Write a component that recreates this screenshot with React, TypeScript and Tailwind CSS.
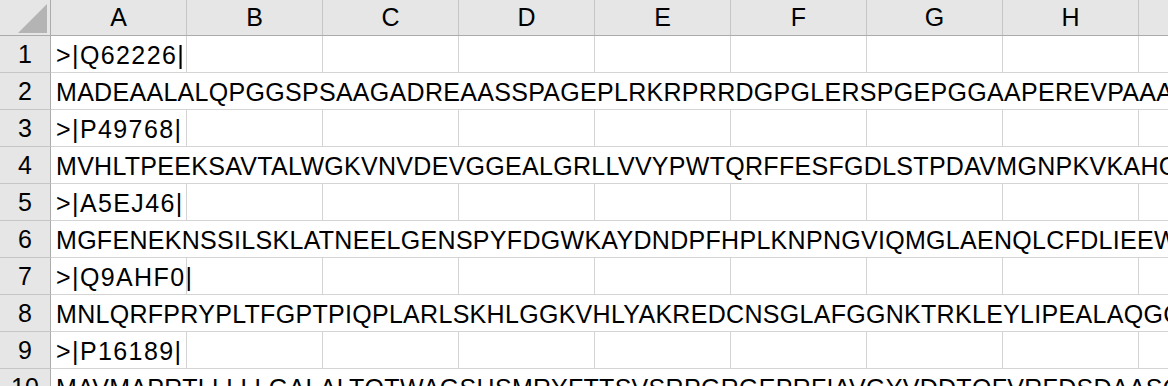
import React from 'react';

const columns = ['A', 'B', 'C', 'D', 'E', 'F', 'G', 'H', 'I'];

// odd rows hold the FASTA header, even rows the sequence that spills over the cells
const rows: string[] = [
  '>|Q62226|',
  'MADEAALALQPGGSPSAAGADREAASSPAGEPLRKRPRRDGPGLERSPGEPGGAAPEREVPAAARAVSEPG',
  '>|P49768|',
  'MVHLTPEEKSAVTALWGKVNVDEVGGEALGRLLVVYPWTQRFFESFGDLSTPDAVMGNPKVKAHGKKVLGAF',
  '>|A5EJ46|',
  'MGFENEKNSSILSKLATNEELGENSPYFDGWKAYDNDPFHPLKNPNGVIQMGLAENQLCFDLIEEWTRKNP',
  '>|Q9AHF0|',
  'MNLQRFPRYPLTFGPTPIQPLARLSKHLGGKVHLYAKREDCNSGLAFGGNKTRKLEYLIPEALAQGCDTLV',
  '>|P16189|',
  'MAVMAPRTLLLLLGALALTQTWAGSHSMRYFTTSVSRPGRGEPRFIAVGYVDDTQFVRFDSDAASQRMEP',
];

const font = { fontFamily: '"Liberation Sans", Arial, sans-serif' };

const HeaderRow = () => (
  <div className="flex h-[36px] shrink-0 bg-[#e6e6e6] border-b border-[#ababab]">
    <div className="relative w-[51px] shrink-0 border-r border-[#ababab]">
      <svg className="absolute left-0 top-0" width="50" height="35" viewBox="0 0 50 35">
        <polygon points="18,33 47,33 47,4" fill="#b4b4b4" />
      </svg>
    </div>
    {columns.map((c) => (
      <div
        key={c}
        className="w-[136px] shrink-0 border-r border-[#c6c6c6] flex items-center justify-center text-[25px] text-black pt-[1px]"
      >
        {c}
      </div>
    ))}
  </div>
);

const Row = ({ n, value }: { n: number; value: string }) => {
  const spills = value.length > 12;
  return (
    <div className="flex h-[37px] shrink-0">
      <div className="w-[51px] shrink-0 bg-[#e6e6e6] border-r border-[#ababab] border-b border-b-[#c6c6c6] flex items-center justify-center text-[25px] text-black pt-[2px]">
        {n}
      </div>
      {spills ? (
        <div className="flex-1 border-b border-[#d4d4d4] flex items-center pl-[5px] pt-[3px] text-[25px] tracking-[0.3px] text-black whitespace-nowrap overflow-hidden">
          {value}
        </div>
      ) : (
        <>
          <div className="w-[136px] shrink-0 border-r border-b border-[#d4d4d4] flex items-center pl-[5px] pt-[3px] text-[25px] tracking-[1.4px] text-black whitespace-nowrap">
            {value}
          </div>
          {columns.slice(1).map((c) => (
            <div key={c} className="w-[136px] shrink-0 border-r border-b border-[#d4d4d4]" />
          ))}
        </>
      )}
    </div>
  );
};

export default function App() {
  return (
    <div className="w-[1168px] h-[386px] overflow-hidden bg-white flex flex-col" style={font}>
      <HeaderRow />
      {rows.map((v, i) => (
        <Row key={i} n={i + 1} value={v} />
      ))}
    </div>
  );
}
